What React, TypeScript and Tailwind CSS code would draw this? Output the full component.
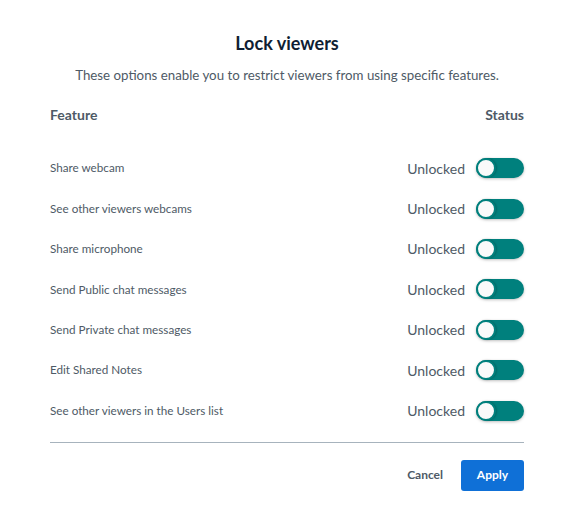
import React from "react";

const rows = [
  "Share webcam",
  "See other viewers webcams",
  "Share microphone",
  "Send Public chat messages",
  "Send Private chat messages",
  "Edit Shared Notes",
  "See other viewers in the Users list",
];

function Toggle() {
  return (
    <div className="relative h-5 w-12 rounded-full bg-[#00807d] shadow-[0_1px_3px_rgba(0,0,0,0.25)]">
      <div className="absolute left-0 top-0 h-5 w-5 rounded-full border-2 border-[#00807d] bg-[#fafafa] shadow-[1px_0_2px_rgba(0,0,0,0.2)]" />
    </div>
  );
}

export default function App() {
  return (
    <div
      className="h-[519px] w-[579px] bg-white"
      style={{ fontFamily: "Lato, 'Liberation Sans', sans-serif" }}
    >
      <div className="ml-[50px] w-[474px] pt-[31px]">
        <h1 className="text-center text-[18px] font-bold leading-6 text-[#0f1e33]">Lock viewers</h1>
        <p className="mt-[10px] text-center text-[13.3px] leading-5 text-[#4e5a66]">
          These options enable you to restrict viewers from using specific features.
        </p>
        <div className="mt-[20px] flex items-center justify-between text-[14px] font-bold leading-5 text-[#4e5a66]">
          <span>Feature</span>
          <span>Status</span>
        </div>
        <div className="mt-[23px] flex flex-col">
          {rows.map((r) => (
            <div key={r} className="flex h-[40.4px] items-center justify-between">
              <span className="text-[11.7px] text-[#4e5a66]">{r}</span>
              <div className="flex items-center gap-[11px]">
                <span className="text-[14px] text-[#4e5a66]">Unlocked</span>
                <Toggle />
              </div>
            </div>
          ))}
        </div>
        <div className="mt-[11px] h-px bg-[#a7b3bd]" />
        <div className="mt-[17px] flex items-center justify-end gap-[18px]">
          <button className="text-[12px] font-bold text-[#4e5a66]">Cancel</button>
          <button className="h-[31px] w-[63px] rounded-[3px] bg-[#0f70d7] text-[12px] font-bold text-white">
            Apply
          </button>
        </div>
      </div>
    </div>
  );
}
